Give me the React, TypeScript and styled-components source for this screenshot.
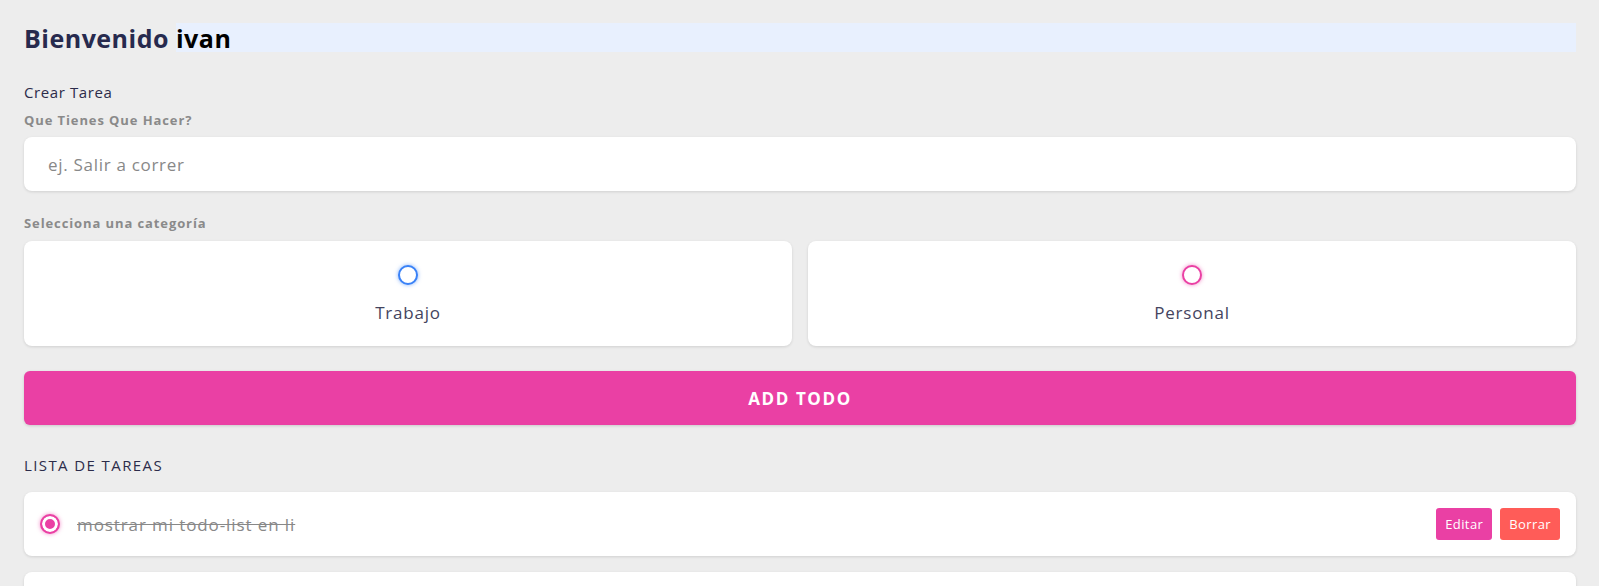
import { useState } from "react";
import styled, { createGlobalStyle } from "styled-components";

const GlobalStyle = createGlobalStyle`
  * { box-sizing: border-box; }
  body {
    margin: 0;
    background: #ededed;
    font-family: "Open Sans", "Liberation Sans", sans-serif;
    color: #2c2c4a;
  }
`;

type Category = "trabajo" | "personal";

type Todo = {
  id: number;
  text: string;
  category: Category;
  done: boolean;
};

const initialTodos: Todo[] = [
  { id: 1, text: "mostrar mi todo-list en li", category: "personal", done: true },
  { id: 2, text: "guardar las tareas en localStorage", category: "trabajo", done: false },
];

const colors: Record<Category, string> = {
  trabajo: "#3a82f7",
  personal: "#ea40a4",
};

export default function App() {
  const [name, setName] = useState("ivan");
  const [todos] = useState(initialTodos);

  return (
    <>
      <GlobalStyle />
      <Page>
        <Greeting>
          Bienvenido&nbsp;
          <NameInput value={name} onChange={(e) => setName(e.target.value)} />
        </Greeting>

        <SectionTitle>Crear Tarea</SectionTitle>
        <FieldLabel>Que Tienes Que Hacer?</FieldLabel>
        <TextInput placeholder="ej. Salir a correr" />

        <FieldLabel $top={24}>Selecciona una categoría</FieldLabel>
        <Options>
          <OptionCard>
            <Radio $color={colors.trabajo} />
            Trabajo
          </OptionCard>
          <OptionCard>
            <Radio $color={colors.personal} />
            Personal
          </OptionCard>
        </Options>

        <AddButton>ADD TODO</AddButton>

        <ListTitle>Lista de tareas</ListTitle>
        <TodoList>
          {todos.map((todo) => (
            <TodoItem key={todo.id}>
              <Radio $color={colors[todo.category]} $checked={todo.done} />
              <TodoText $done={todo.done}>{todo.text}</TodoText>
              <Actions>
                <SmallButton $bg="#ea40a4">Editar</SmallButton>
                <SmallButton $bg="#ff5c58">Borrar</SmallButton>
              </Actions>
            </TodoItem>
          ))}
        </TodoList>
      </Page>
    </>
  );
}

const Page = styled.main`
  height: 586px;
  overflow: hidden;
  padding: 23px 23px 0 24px;
`;

const Greeting = styled.h1`
  display: flex;
  align-items: center;
  margin: 0;
  height: 29px;
  font-size: 25px;
  font-weight: 700;
  letter-spacing: 0.5px;
  color: #272a4e;
  white-space: nowrap;
`;

const NameInput = styled.input`
  flex: 1;
  height: 29px;
  border: none;
  outline: none;
  padding: 0;
  background: #e8f0fe;
  font: inherit;
  letter-spacing: inherit;
  color: #000;
`;

const SectionTitle = styled.h2`
  margin: 31px 0 0;
  font-size: 15px;
  line-height: 18px;
  font-weight: 400;
  letter-spacing: 0.6px;
  color: #2c2c4a;
`;

const FieldLabel = styled.label<{ $top?: number }>`
  display: block;
  margin-top: ${(p) => p.$top ?? 11}px;
  font-size: 13px;
  line-height: 16px;
  font-weight: 700;
  letter-spacing: 0.9px;
  color: #8a8a8a;
`;

const TextInput = styled.input`
  display: block;
  width: 100%;
  height: 54px;
  margin-top: 9px;
  padding: 0 24px;
  border: none;
  border-radius: 8px;
  background: #fff;
  box-shadow: 0 1px 3px rgba(0, 0, 0, 0.12);
  font-family: inherit;
  font-size: 17px;
  letter-spacing: 0.7px;
  color: #333;
  outline: none;

  &::placeholder {
    color: #888;
  }
`;

const Options = styled.div`
  display: grid;
  grid-template-columns: 1fr 1fr;
  gap: 16px;
  margin-top: 10px;
`;

const OptionCard = styled.label`
  display: flex;
  flex-direction: column;
  align-items: center;
  gap: 17px;
  height: 105px;
  padding-top: 24px;
  border-radius: 8px;
  background: #fff;
  box-shadow: 0 1px 3px rgba(0, 0, 0, 0.12);
  font-size: 17px;
  line-height: 22px;
  letter-spacing: 0.8px;
  color: #44445e;
  cursor: pointer;
`;

const Radio = styled.span<{ $color: string; $checked?: boolean }>`
  flex: none;
  width: 20px;
  height: 20px;
  border-radius: 50%;
  border: 2px solid ${(p) => p.$color};
  background: ${(p) => (p.$checked ? p.$color : "#fff")};
  box-shadow: ${(p) =>
    p.$checked
      ? `inset 0 0 0 3px #fff, 0 0 4px ${p.$color}99`
      : `0 0 4px ${p.$color}99`};
`;

const AddButton = styled.button`
  display: block;
  width: 100%;
  height: 54px;
  margin-top: 25px;
  border: none;
  border-radius: 6px;
  background: #ea40a4;
  box-shadow: 0 1px 3px rgba(0, 0, 0, 0.15);
  font-family: inherit;
  font-size: 17px;
  font-weight: 700;
  letter-spacing: 1.6px;
  color: #fff;
  cursor: pointer;
`;

const ListTitle = styled.h3`
  margin: 31px 0 0;
  font-size: 15px;
  line-height: 18px;
  font-weight: 400;
  letter-spacing: 1.4px;
  text-transform: uppercase;
  color: #2c2c4a;
`;

const TodoList = styled.ul`
  display: flex;
  flex-direction: column;
  gap: 16px;
  margin: 18px 0 0;
  padding: 0;
  list-style: none;
`;

const TodoItem = styled.li`
  display: flex;
  align-items: center;
  gap: 17px;
  height: 64px;
  padding: 0 16px;
  border-radius: 8px;
  background: #fff;
  box-shadow: 0 1px 3px rgba(0, 0, 0, 0.12);
`;

const TodoText = styled.span<{ $done: boolean }>`
  flex: 1;
  font-size: 17px;
  letter-spacing: 0.9px;
  color: ${(p) => (p.$done ? "#888" : "#333")};
  text-decoration: ${(p) => (p.$done ? "line-through" : "none")};
`;

const Actions = styled.div`
  display: flex;
  gap: 8px;
`;

const SmallButton = styled.button<{ $bg: string }>`
  height: 32px;
  padding: 0 9px;
  border: none;
  border-radius: 3px;
  background: ${(p) => p.$bg};
  font-family: inherit;
  font-size: 13px;
  letter-spacing: 0.4px;
  color: #fff;
  cursor: pointer;
`;
